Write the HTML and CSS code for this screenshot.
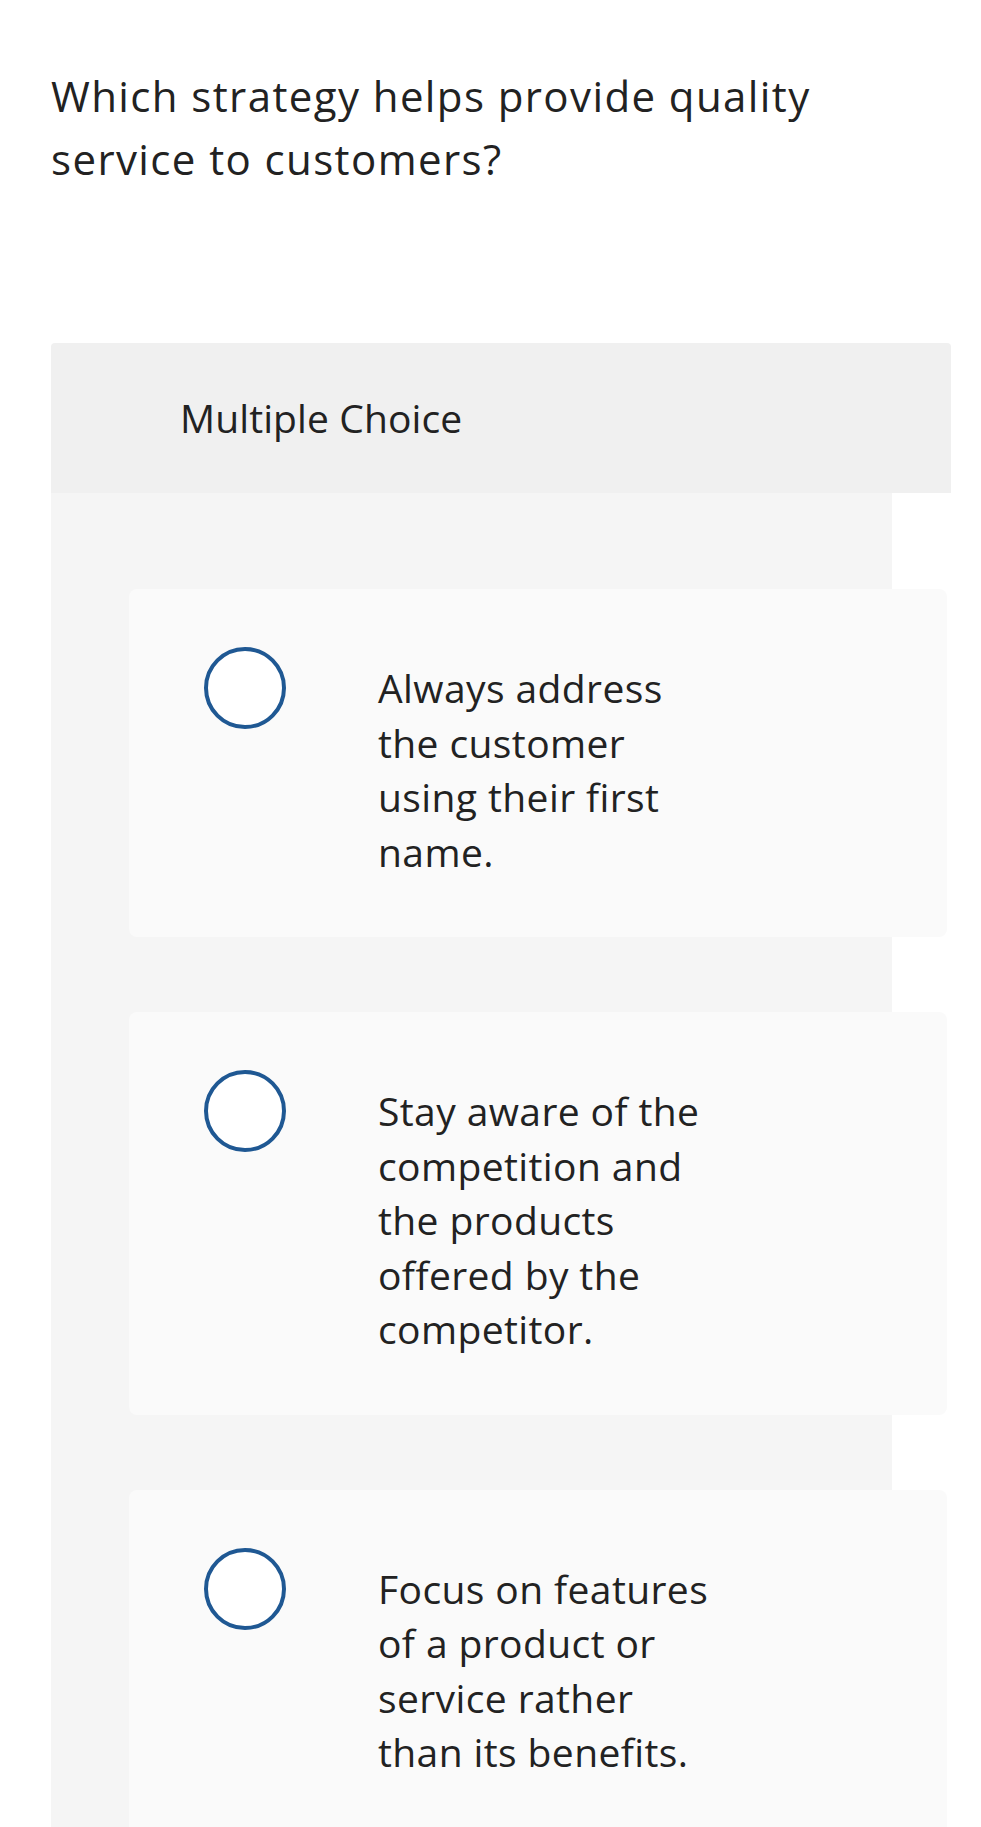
FILE: index.html
```html
<!DOCTYPE html>
<html lang="en">
<head>
    <meta charset="UTF-8">
    <meta name="viewport" content="width=device-width, initial-scale=1.0">
    <title>Question</title>
    <link rel="stylesheet" href="styles.css">
</head>
<body>
    <main class="page">
        <h1 class="question">Which strategy helps provide quality service to customers?</h1>

        <section class="choice-box">
            <header class="choice-head">Multiple Choice</header>

            <div class="choice-body">
                <!-- options -->
                <label class="option">
                    <span class="radio"></span>
                    <p class="option-text">Always address the customer using their first name.</p>
                </label>
                <label class="option">
                    <span class="radio"></span>
                    <p class="option-text">Stay aware of the competition and the products offered by the competitor.</p>
                </label>
                <label class="option">
                    <span class="radio"></span>
                    <p class="option-text">Focus on features of a product or service rather than its benefits.</p>
                </label>
            </div>
        </section>
    </main>
</body>
</html>
```

FILE: styles.css
```css
html, body {
    margin: 0;
    padding: 0;
    background-color: #ffffff;
}

body {
    font-family: "Open Sans", Lato, sans-serif;
    color: #222222;
    overflow: hidden;
    font-variant-ligatures: none;
}

.page {
    padding-left: 51px;
}

.question {
    margin: 64px 0 153px 0;
    max-width: 800px;
    font-size: 42px;
    line-height: 63px;
    letter-spacing: 1.4px;
    font-weight: normal;
}

.choice-box {
    width: 900px;
}

.choice-head {
    background-color: #f0f0f0;
    border-radius: 4px 4px 0 0;
    padding: 48px 0 48px 129px;
    font-size: 39px;
    line-height: 54px;
    letter-spacing: 0.1px;
}

.choice-body {
    width: 763px;
    background-color: #f5f5f5;
    padding: 96px 0 40px 78px;
    display: flex;
    flex-direction: column;
    gap: 75px;
}

.option {
    display: flex;
    align-items: flex-start;
    gap: 92px;
    width: 743px;
    flex-shrink: 0;
    padding: 58px 0 58px 75px;
    background-color: #fafafa;
    border-radius: 8px;
    cursor: pointer;
}

.radio {
    flex: none;
    width: 74px;
    height: 74px;
    border: 4px solid #1f5893;
    border-radius: 50%;
    background-color: #ffffff;
}

.option-text {
    margin: 14px 0 0 0;
    width: 334px;
    font-size: 39px;
    line-height: 54.5px;
    letter-spacing: 0.4px;
}
```
